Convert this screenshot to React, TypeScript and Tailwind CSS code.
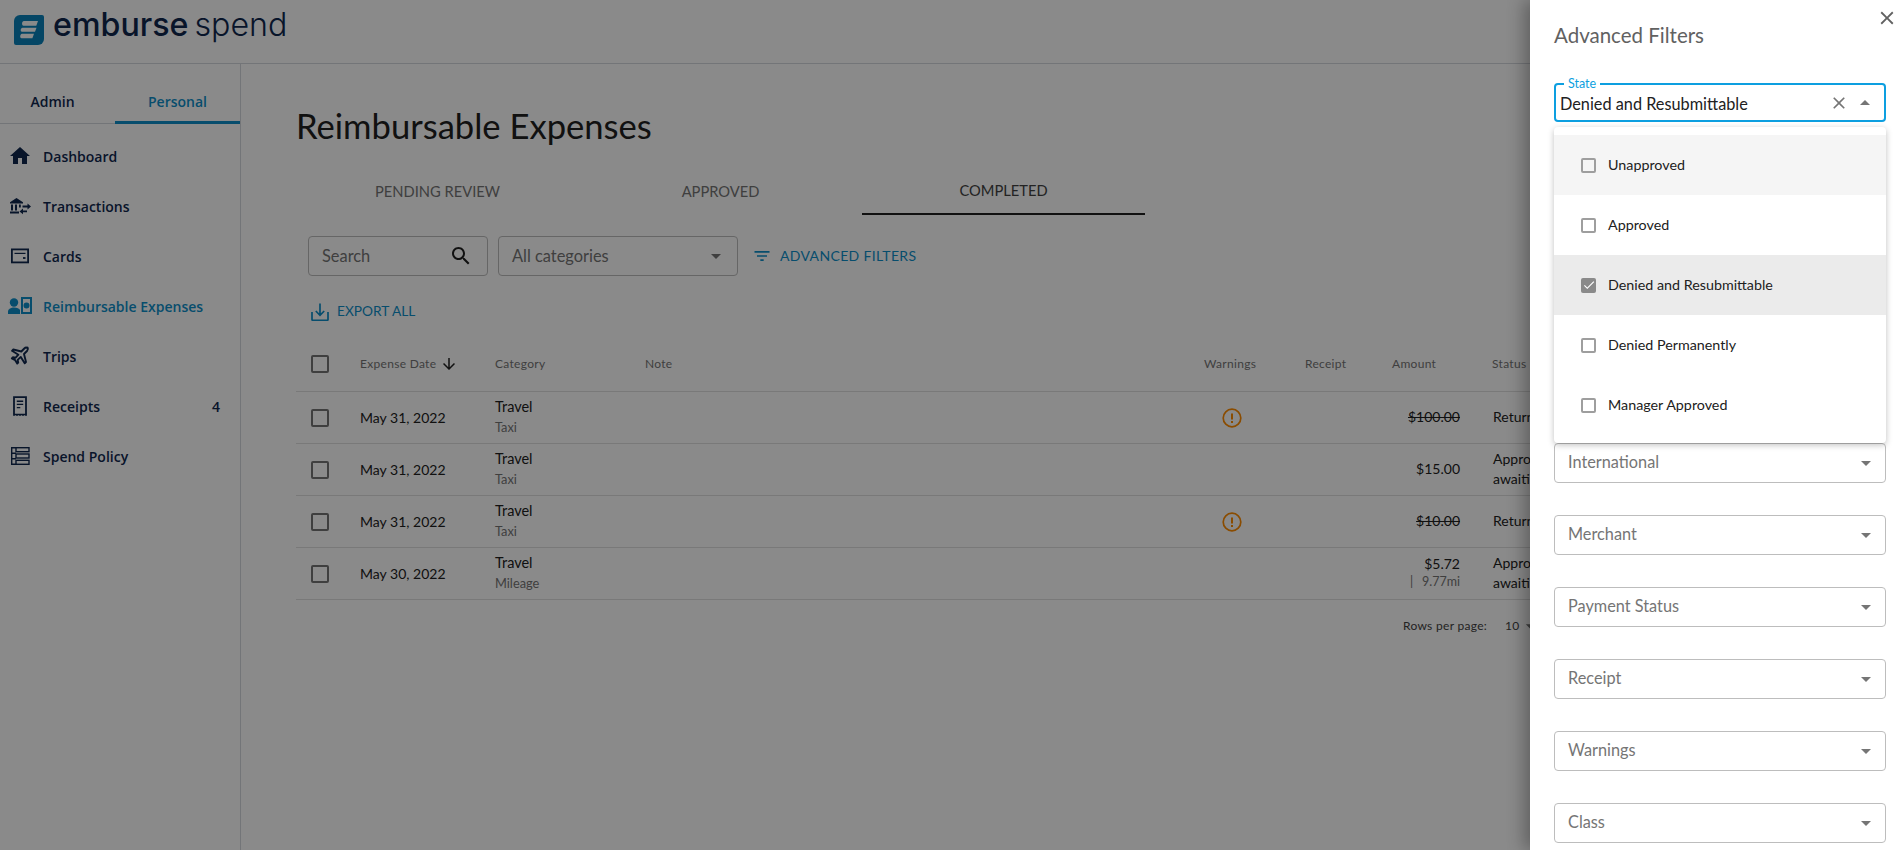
import React from "react";

const lato = "font-['Lato',sans-serif]";

function Mui({ d, className = "" }: { d: string; className?: string }) {
  return (
    <svg viewBox="0 0 24 24" fill="currentColor" className={className}>
      <path d={d} />
    </svg>
  );
}

const DROP = "M7 10l5 5 5-5z";
const CLOSE = "M19 6.41L17.59 5 12 10.59 6.41 5 5 6.41 10.59 12 5 17.59 6.41 19 12 13.41 17.59 19 19 17.59 13.41 12z";

const HomeIcon = () => <Mui d="M10 20v-6h4v6h5v-8h3L12 3 2 12h3v8z" className="w-6 h-6" />;
const BankIcon = () => (
  <svg viewBox="0 0 24 24" fill="currentColor" className="w-6 h-6">
    <path d="M2 8.2 8.500 4 15 8.200V9.400H2zM3 10.600h2v6H3zM7 10.600h2v6H7zM11 10.600h1.800v3H11zM2 17.600h9v1.800H2z" />
    <path d="M14.500 11.500h5v-2l3.500 3-3.500 3v-2h-5zM15 14.500v2h4v1.800h-4v2l-3.500-2.900z" />
  </svg>
);
const CardIcon = () => (
  <svg viewBox="0 0 24 24" fill="none" stroke="currentColor" className="w-6 h-6">
    <rect x="3.900" y="5.400" width="16.200" height="13" strokeWidth="1.800" />
    <path d="M6.500 9.400h11" strokeWidth="1.200" />
    <path d="M15 14h2.500" strokeWidth="1.800" />
  </svg>
);
const ReimbIcon = () => (
  <svg viewBox="0 0 24 18" fill="currentColor" className="w-6 h-[18px]">
    <circle cx="6" cy="5.500" r="4.200" />
    <path d="M0 17v-2.600C0 12 3 10.400 6 10.400s5.400 1 6 2.600V17z" />
    <path fillRule="evenodd" d="M13 0h11v17H13zM15 2v13h7V2zM18.500 5.500a3 3 0 1 1 0 6 3 3 0 0 1 0-6z" />
  </svg>
);
const PlaneIcon = () => (
  <svg viewBox="0 0 24 24" fill="none" stroke="currentColor" strokeWidth="1.900" strokeLinejoin="round" className="w-6 h-6">
    <path d="M19.600 4.200c-1-.9-2.400-.6-3.300.3l-3 3-8-2-1.300 1.300 6.400 3.900-3 3.100-2.600-.5-1 1 3.400 1.900 2 3.400 1-1-.5-2.700 3.100-3 3.900 6.400 1.300-1.300-2-8 3-3c.9-1 1.300-2.300.6-3.400z" />
  </svg>
);
const ReceiptIcon = () => (
  <svg viewBox="0 0 24 24" fill="none" stroke="currentColor" className="w-6 h-6">
    <path d="M6 20V3.200h12V20" strokeWidth="1.800" />
    <path d="M8.800 7.200h6.400M8.800 10.400h6.400M8.800 13.600h3.500" strokeWidth="1.400" />
    <path d="M5.100 20.500h13.800M6 20.500V22M9 20.500V22M12 20.500V22M15 20.500V22M18 20.500V22" strokeWidth="1.300" />
  </svg>
);
const PolicyIcon = () => (
  <svg viewBox="0 0 24 24" fill="none" stroke="currentColor" strokeWidth="1.400" className="w-6 h-6">
    <path d="M8 3.700H3.700v16.600H8M3.700 9.200H8M3.700 14.800H8" />
    <rect x="8" y="3.700" width="13" height="4" />
    <rect x="8" y="10" width="13" height="4" />
    <rect x="8" y="16.300" width="13" height="4" />
  </svg>
);

const nav: { label: string; icon: React.ReactNode; active?: boolean; badge?: string }[] = [
  { label: "Dashboard", icon: <HomeIcon /> },
  { label: "Transactions", icon: <BankIcon /> },
  { label: "Cards", icon: <CardIcon /> },
  { label: "Reimbursable Expenses", icon: <ReimbIcon />, active: true },
  { label: "Trips", icon: <PlaneIcon /> },
  { label: "Receipts", icon: <ReceiptIcon />, badge: "4" },
  { label: "Spend Policy", icon: <PolicyIcon /> },
];

function Check() {
  return <span className="block w-[18px] h-[18px] shrink-0 border-2 border-[#757575] rounded-[2px]" />;
}

const WarnIcon = () => (
  <svg viewBox="0 0 20 20" className="w-5 h-5 text-[#ff8c00]" fill="none" stroke="currentColor">
    <circle cx="10" cy="10" r="8.800" strokeWidth="1.700" />
    <path d="M10 5.500v6" strokeWidth="2" />
    <path d="M10 13v2" strokeWidth="2" />
  </svg>
);

const rows = [
  { date: "May 31, 2022", sub: "Taxi", warn: true, amount: "$100.00", strike: true, status: ["Returned"] },
  { date: "May 31, 2022", sub: "Taxi", warn: false, amount: "$15.00", strike: false, status: ["Approved,", "awaiting"] },
  { date: "May 31, 2022", sub: "Taxi", warn: true, amount: "$10.00", strike: true, status: ["Returned"] },
  { date: "May 30, 2022", sub: "Mileage", warn: false, amount: "$5.72", strike: false, mi: "9.77mi", status: ["Approved,", "awaiting"] },
];

const stateOptions = ["Unapproved", "Approved", "Denied and Resubmittable", "Denied Permanently", "Manager Approved"];
const fields = ["International", "Merchant", "Payment Status", "Receipt", "Warnings", "Class"];

function Row({ r }: { r: (typeof rows)[number] }) {
  return (
    <div className="flex items-center h-[52px] border-b border-[#e0e0e0] text-[14px] text-[#212121]">
      <div className="w-[64px] pl-[15px] shrink-0"><Check /></div>
      <div className="w-[135px] shrink-0 text-[14px] pb-[1px]">{r.date}</div>
      <div className="w-[150px] shrink-0 leading-[20px] pb-[1px]">
        <div className="text-[14.5px]">Travel</div>
        <div className="text-[12.800px] text-[#757575]">{r.sub}</div>
      </div>
      <div className="w-[552px] shrink-0" />
      <div className="w-[70px] shrink-0 flex justify-center">{r.warn && <WarnIcon />}</div>
      <div className="w-[114px] shrink-0" />
      <div className="w-[79px] shrink-0 text-right leading-[18px] pb-[1px]">
        <div className={r.strike ? "line-through" : ""}>{r.amount}</div>
        {r.mi && <div className="text-[12.500px] text-[#757575] flex justify-between pl-[29px]"><span>|</span><span>{r.mi}</span></div>}
      </div>
      <div className="pl-[33px] whitespace-nowrap leading-[20px] pb-[1px]">
        {r.status.map((s) => <div key={s}>{s}</div>)}
      </div>
    </div>
  );
}

function Select({ label }: { label: string }) {
  return (
    <div className="relative flex items-center h-10 mb-8 border border-[#bdbdbd] rounded-[4px] pl-[13px] pr-[7px] text-[16.3px] text-[#757575] bg-white">
      <span className="flex-1 pb-[2px]">{label}</span>
      <Mui d={DROP} className="w-6 h-6 text-[#757575]" />
    </div>
  );
}

export default function App() {
  return (
    <div className={`relative w-[1900px] h-[850px] overflow-hidden bg-white ${lato}`}>
      <header className="h-[64px] border-b border-[#d5d9de] flex items-center pl-[14px]">
        <svg viewBox="0 0 30 30" className="w-[30px] h-[30px] -mt-[4px]">
          <path d="M6 0H28a2 2 0 0 1 2 2V24a6 6 0 0 1-6 6H2a2 2 0 0 1-2-2V6a6 6 0 0 1 6-6z" fill="#0a82bb" />
          <path d="M10 6H24L22.300 10.800H9.500C7.500 10.800 7.500 6 10 6zM8.500 12.700H22.500L21 16.700H8C6 16.700 6.500 12.700 8.500 12.700zM8 18.800H20L18.400 23.300H7.500C5.500 23.300 6 18.800 8 18.800z" fill="#ffffff" />
        </svg>
        <div className="ml-[9px] flex items-baseline text-[#10284f] font-['Inter',sans-serif] text-[32.2px] leading-none -mt-[12px]">
          <span className="font-medium">emburse</span>
          <span className="ml-[6px] font-light">spend</span>
        </div>
      </header>

      <div className="flex h-[786px]">
        <aside className="w-[241px] shrink-0 border-r border-[#d5d9de] font-['Open_Sans',sans-serif]">
          <div className="flex h-[60px] border-b border-[#d5d9de] text-[14px] font-semibold">
            <div className="w-[105px] flex items-center justify-center text-[#10284f] pt-[15px]">Admin</div>
            <div className="w-[10px]" />
            <div className="flex-1 flex items-center justify-center text-[#0d8fca] border-b-[3px] border-[#0d8fca] pt-[17px] -mb-px">Personal</div>
          </div>
          <nav className="pt-[7px]">
            {nav.map((n) => (
              <div key={n.label} className={`flex items-center h-[50px] pl-[8px] pr-[20px] text-[14px] font-semibold ${n.active ? "text-[#0d8fca]" : "text-[#10284f]"}`}>
                <span className="w-[24px] h-[24px] flex items-center justify-center shrink-0">{n.icon}</span>
                <span className="ml-[11px] flex-1">{n.label}</span>
                {n.badge && <span>{n.badge}</span>}
              </div>
            ))}
          </nav>
        </aside>

        <main className="flex-1 pl-[55px]">
          <h1 className="text-[34.6px] leading-[40px] mt-[42px] text-[#212121]">Reimbursable Expenses</h1>
          <div className="flex mt-[21px] h-[48px] text-[14.7px]">
            <div className="w-[283px] flex items-center justify-center text-[#757575]">PENDING REVIEW</div>
            <div className="w-[283px] flex items-center justify-center text-[#757575]">APPROVED</div>
            <div className="w-[283px] flex items-center justify-center text-[#424242] border-b-2 border-[#212121]">COMPLETED</div>
          </div>

          <div className="flex items-center mt-[21px] ml-[12px] h-[40px]">
            <div className="w-[180px] h-10 border border-[#bdbdbd] rounded-[4px] flex items-center pl-[13px] pr-[14px] text-[16.4px] text-[#757575]">
              <span className="flex-1">Search</span>
              <Mui d="M15.500 14h-.79l-.28-.27C15.410 12.590 16 11.110 16 9.500 16 5.910 13.090 3 9.500 3S3 5.910 3 9.500 5.910 16 9.500 16c1.610 0 3.090-.59 4.230-1.570l.27.28v.79l5 4.990L20.490 19l-4.990-5zm-6 0C7.010 14 5 11.990 5 9.500S7.010 5 9.500 5 14 7.010 14 9.500 11.990 14 9.500 14z" className="w-6 h-6 text-[#212121]" />
            </div>
            <div className="w-[240px] ml-[10px] h-10 border border-[#bdbdbd] rounded-[4px] flex items-center pl-[13px] pr-[9px] text-[16.4px] text-[#757575]">
              <span className="flex-1">All categories</span>
              <Mui d={DROP} className="w-6 h-6 text-[#757575]" />
            </div>
            <Mui d="M10 18h4v-2h-4v2zM3 6v2h18V6H3zm3 7h12v-2H6v2z" className="w-5 h-5 ml-[14px] -mt-[1px] text-[#0d8fca]" />
            <span className="ml-[8px] pb-[2px] text-[14px] text-[#0d8fca] tracking-[0.35px]">ADVANCED FILTERS</span>
          </div>

          <div className="flex items-center mt-[24px] ml-[15px] h-[24px] text-[13.7px] text-[#0d8fca]">
            <svg viewBox="0 0 18 18" fill="none" stroke="currentColor" strokeWidth="1.700" className="w-[18px] h-[18px] -mt-[1px]">
              <path d="M1 9v7.500c0 .5.300.800.800.800h14.400c.500 0 .800-.300.800-.800V9" />
              <path d="M9 .5v11M4.800 8 9 12.300 13.200 8" />
            </svg>
            <span className="ml-[8px] pb-[2px]">EXPORT ALL</span>
          </div>

          <div className="mt-[12px] w-[1300px]">
            <div className="flex items-center h-[56px] border-b border-[#e0e0e0] text-[12px] tracking-[0.3px] text-[#757575]">
              <div className="w-[64px] pl-[15px] shrink-0"><Check /></div>
              <div className="w-[135px] shrink-0 flex items-center">
                Expense Date
                <Mui d="M20 12l-1.410-1.410L13 16.170V4h-2v12.170l-5.580-5.590L4 12l8 8 8-8z" className="w-[18px] h-[18px] ml-[4px] text-[#212121]" />
              </div>
              <div className="w-[150px] shrink-0">Category</div>
              <div className="w-[559px] shrink-0">Note</div>
              <div className="w-[101px] shrink-0">Warnings</div>
              <div className="w-[87px] shrink-0">Receipt</div>
              <div className="w-[100px] shrink-0">Amount</div>
              <div>Status</div>
            </div>
            {rows.map((r, i) => <Row key={i} r={r} />)}
            <div className="flex items-center h-[52px] pl-[1107px] text-[12px] tracking-[0.3px] text-[#424242]">
              <span>Rows per page:</span>
              <span className="ml-[18px]">10</span>
              <Mui d={DROP} className="w-5 h-5 text-[#757575]" />
            </div>
          </div>
        </main>
      </div>

      {/* backdrop */}
      <div className="absolute inset-0 bg-black/[0.46]" />

      {/* drawer */}
      <div className="absolute top-0 right-0 bottom-0 w-[370px] bg-white shadow-[-6px_0_16px_rgba(0,0,0,0.3)] pl-[24px] pr-[14px]">
        <button className="absolute top-[7px] right-[2px] text-[#616161]">
          <Mui d={CLOSE} className="w-[22px] h-[22px]" />
        </button>
        <div className="text-[20.5px] leading-[24px] pt-[23px] text-[#616161]">Advanced Filters</div>
        <div className="relative mt-[36px] h-[39px] border-2 border-[#0d9fe0] rounded-[4px] flex items-center pl-[4px] pr-[7px] text-[16.3px] text-[#212121]">
          <span className="absolute -top-[8px] left-[8px] px-[4px] bg-white text-[12.5px] leading-[14px] text-[#0d9fe0]">State</span>
          <span className="flex-1 pt-[3px]">Denied and Resubmittable</span>
          <Mui d={CLOSE} className="w-5 h-5 text-[#757575] mr-[4px]" />
          <Mui d="M7 14l5-5 5 5z" className="w-6 h-6 text-[#757575]" />
        </div>
        <div className="relative z-10 mt-[5px] h-[316px] bg-white rounded-[4px] py-[8px] shadow-[0_2px_6px_rgba(0,0,0,0.25)] text-[14.3px] text-[#212121]">
          {stateOptions.map((o, i) => (
            <div key={o} className={`flex items-center h-[60px] pl-[27px] ${i === 0 ? "bg-[#f5f5f5]" : i === 2 ? "bg-[#ebebeb]" : ""}`}>
              {i === 2 ? (
                <span className="w-[15px] h-[15px] rounded-[2px] bg-[#8a8a8a] flex items-center justify-center">
                  <svg viewBox="0 0 24 24" className="w-[14px] h-[14px] text-white" fill="currentColor"><path d="M9 16.170 4.830 12l-1.420 1.410L9 19 21 7l-1.410-1.410z" /></svg>
                </span>
              ) : (
                <span className="w-[15px] h-[15px] rounded-[2px] border-2 border-[#9e9e9e]" />
              )}
              <span className="ml-[12px] pb-[1px]">{o}</span>
            </div>
          ))}
        </div>
        <div>
          {fields.map((f) => <Select key={f} label={f} />)}
        </div>
      </div>
    </div>
  );
}
